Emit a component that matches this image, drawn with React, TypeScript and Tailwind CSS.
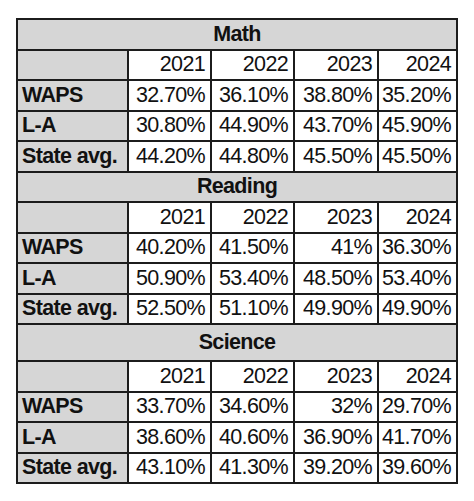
import React from 'react';

type Section = {
  title: string;
  titleHeight: string;
  rows: { label: string; values: string[] }[];
};

const years = ['2021', '2022', '2023', '2024'];

const sections: Section[] = [
  {
    title: 'Math',
    titleHeight: 'h-[30.5px]',
    rows: [
      { label: 'WAPS', values: ['32.70%', '36.10%', '38.80%', '35.20%'] },
      { label: 'L-A', values: ['30.80%', '44.90%', '43.70%', '45.90%'] },
      { label: 'State avg.', values: ['44.20%', '44.80%', '45.50%', '45.50%'] },
    ],
  },
  {
    title: 'Reading',
    titleHeight: 'h-[30.5px]',
    rows: [
      { label: 'WAPS', values: ['40.20%', '41.50%', '41%', '36.30%'] },
      { label: 'L-A', values: ['50.90%', '53.40%', '48.50%', '53.40%'] },
      { label: 'State avg.', values: ['52.50%', '51.10%', '49.90%', '49.90%'] },
    ],
  },
  {
    title: 'Science',
    titleHeight: 'h-[37px]',
    rows: [
      { label: 'WAPS', values: ['33.70%', '34.60%', '32%', '29.70%'] },
      { label: 'L-A', values: ['38.60%', '40.60%', '36.90%', '41.70%'] },
      { label: 'State avg.', values: ['43.10%', '41.30%', '39.20%', '39.60%'] },
    ],
  },
];

const cell = 'border-2 border-[#1c1c1c] h-[30.5px] p-0 leading-none';

export default function App() {
  return (
    <div className="w-[474px] h-[501px] bg-white pt-[18px] pl-[16px] text-[#111] text-[21.5px] tracking-[-0.65px]" style={{ fontFamily: '"Liberation Sans", Arial, sans-serif' }}>
      <table className="table-fixed border-collapse w-[440px]">
        <colgroup>
          <col className="w-[111px]" />
          <col className="w-[83px]" />
          <col className="w-[83px]" />
          <col className="w-[84px]" />
          <col className="w-[79px]" />
        </colgroup>
        <tbody>
          {sections.map((s) => (
            <React.Fragment key={s.title}>
              <tr>
                <td colSpan={5} className={`${cell} ${s.titleHeight} bg-[#d6d6d6] text-center font-bold`}>
                  {s.title}
                </td>
              </tr>
              <tr>
                <td className={`${cell} bg-[#d6d6d6]`}></td>
                {years.map((y) => (
                  <td key={y} className={`${cell} text-right pr-[5px]`}>{y}</td>
                ))}
              </tr>
              {s.rows.map((r) => (
                <tr key={r.label}>
                  <td className={`${cell} bg-[#d6d6d6] font-bold pl-[4px] whitespace-nowrap`}>{r.label}</td>
                  {r.values.map((v, i) => (
                    <td key={i} className={`${cell} text-right pr-[5px]`}>{v}</td>
                  ))}
                </tr>
              ))}
            </React.Fragment>
          ))}
        </tbody>
      </table>
    </div>
  );
}
